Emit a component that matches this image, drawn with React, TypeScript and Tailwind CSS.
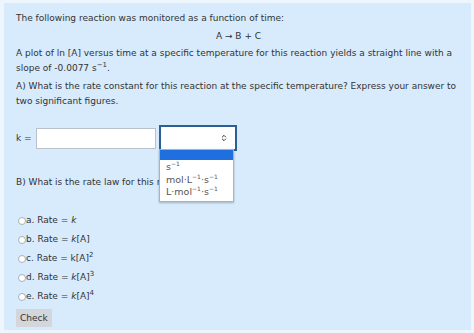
import { ChevronsUpDown } from "lucide-react";

const options = [
  { letter: "a", italic: true, exp: "" },
  { letter: "b", italic: true, exp: "[A]" },
  { letter: "c", italic: false, exp: "[A]", sup: "2" },
  { letter: "d", italic: true, exp: "[A]", sup: "3" },
  { letter: "e", italic: true, exp: "[A]", sup: "4" },
];

const Sup = ({ children, size = "text-[7px]" }: { children: React.ReactNode; size?: string }) => (
  <span className={`${size} leading-none relative -top-[4px]`}>{children}</span>
);

const Radio = () => (
  <span className="inline-block w-[8px] h-[8px] rounded-full border border-[#a7b0ba] bg-white" />
);

export default function App() {
  return (
    <div
      className="w-[474px] h-[333px] bg-[#eef6fd] pl-[4px] pr-[3px] pt-[3px] pb-[3px] text-[#333]"
      style={{ fontFamily: '"DejaVu Sans", Verdana, sans-serif' }}
    >
      <div className="relative h-full bg-[#d7ebfc] pl-[12px] pr-[10px] pt-[8px] text-[9px] leading-[15px]">
        <p>The following reaction was monitored as a function of time:</p>
        <p className="text-center mt-[3px]">A → B + C</p>
        <p className="mt-[2px]">
          A plot of ln [A] versus time at a specific temperature for this reaction yields a straight line with a
          slope of -0.0077 s<Sup>−1</Sup>.
        </p>
        <p className="mt-[3px]">
          A) What is the rate constant for this reaction at the specific temperature? Express your answer to two
          significant figures.
        </p>

        <div className="flex items-center mt-[16px]">
          <span className="mr-[4px]">k =</span>
          <div className="w-[120px] h-[21px] bg-white border border-[#b9c2cc]" />
          <div className="ml-[3px] w-[78px] h-[26px] bg-white border-2 border-[#2c5f93] flex items-center justify-end pr-[7px]">
            <ChevronsUpDown size={8} strokeWidth={3} />
          </div>
        </div>

        <p className="mt-[24px]">B) What is the rate law for this reaction?</p>

        <div className="absolute left-[155px] top-[146px] w-[75px] bg-white border border-[#aab2bb] shadow-[0_1px_2px_rgba(0,0,0,0.25)] text-[9.5px] leading-[12.5px] text-[#555]">
          <div className="h-[10px] bg-[#1f6fde]" />
          <div className="px-[6px] pb-[2px] pt-[1px]">
            <div>
              s<Sup size="text-[6px]">−1</Sup>
            </div>
            <div>
              mol·L<Sup size="text-[6px]">−1</Sup>·s<Sup size="text-[6px]">−1</Sup>
            </div>
            <div>
              L·mol<Sup size="text-[6px]">−1</Sup>·s<Sup size="text-[6px]">−1</Sup>
            </div>
          </div>
        </div>

        <div className="mt-[23px] ml-[2px] flex flex-col gap-[4px]">
          {options.map((o) => (
            <div key={o.letter} className="flex items-center h-[15px]">
              <Radio />
              <span>
                {o.letter}. Rate = {o.italic ? <i>k</i> : "k"}
                {o.exp}
                {o.sup && <Sup>{o.sup}</Sup>}
              </span>
            </div>
          ))}
        </div>

        <button className="mt-[5px] bg-[#d3d6da] text-[#333] px-[4px] h-[18px] leading-[18px] text-[9px]">
          Check
        </button>
      </div>
    </div>
  );
}
